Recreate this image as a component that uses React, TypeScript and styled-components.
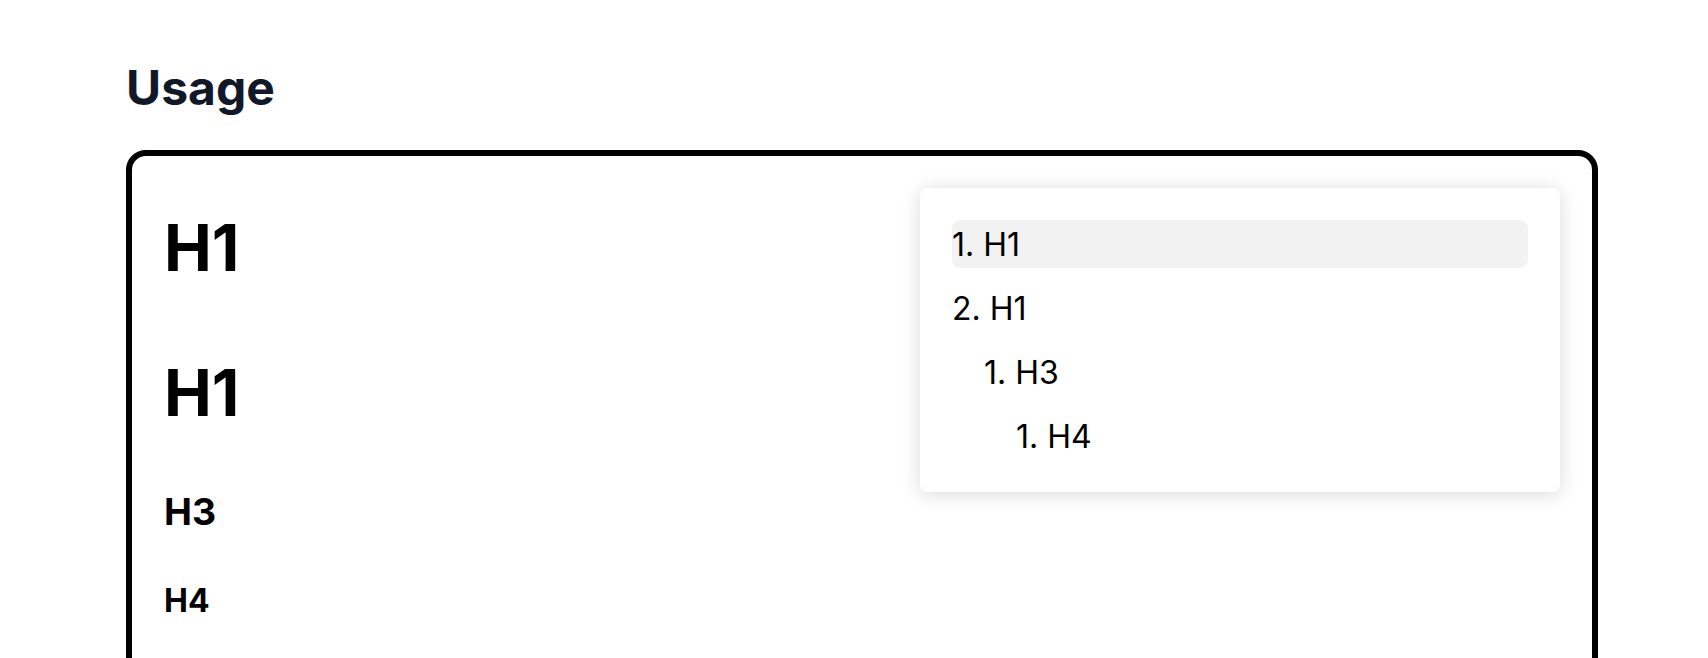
import React from 'react';
import styled, { createGlobalStyle } from 'styled-components';

const GlobalStyle = createGlobalStyle`
  html, body {
    margin: 0;
    padding: 0;
    background: #ffffff;
  }
  body {
    font-family: Inter, "Noto Sans", "Liberation Sans", sans-serif;
    color: #000000;
    line-height: 1.5;
  }
`;

const Page = styled.div`
  padding: 56px 110px 0 126px;
`;

const Title = styled.h2`
  margin: 0 0 30px;
  font-size: 48px;
  line-height: 64px;
  font-weight: 700;
  color: #111827;
`;

const Editor = styled.div`
  position: relative;
  border: 6px solid #000000;
  border-radius: 20px;
  padding: 44px 32px 240px;
  display: flex;
  flex-direction: column;
  align-items: flex-start;
`;

const sizes: Record<number, number> = { 1: 64, 3: 37.44, 4: 32 };
const gaps: Record<number, number> = { 1: 49, 3: 43, 4: 37 };

const Heading = styled.div<{ $level: number }>`
  margin: ${(p) => gaps[p.$level]}px 0 0;
  font-size: ${(p) => sizes[p.$level]}px;
  line-height: 1.5;
  font-weight: 700;
  color: #000000;

  &:first-child {
    margin-top: 0;
  }
`;

const Toc = styled.nav`
  position: absolute;
  top: 32px;
  right: 32px;
  width: 640px;
  box-sizing: border-box;
  padding: 32px;
  background: #ffffff;
  border-radius: 8px;
  box-shadow: 0 2px 20px rgba(0, 0, 0, 0.15);
  display: flex;
  flex-direction: column;
  gap: 16px;
`;

const TocItem = styled.div<{ $depth: number; $active?: boolean }>`
  height: 48px;
  line-height: 50px;
  padding-left: ${(p) => p.$depth * 32}px;
  font-size: 32px;
  font-weight: 400;
  color: #000000;
  border-radius: 8px;
  background: ${(p) => (p.$active ? '#f2f2f2' : 'transparent')};
`;

const headings = [
  { level: 1, text: 'H1' },
  { level: 1, text: 'H1' },
  { level: 3, text: 'H3' },
  { level: 4, text: 'H4' },
];

const toc = [
  { label: '1. H1', depth: 0, active: true },
  { label: '2. H1', depth: 0 },
  { label: '1. H3', depth: 1 },
  { label: '1. H4', depth: 2 },
];

const App: React.FC = () => (
  <>
    <GlobalStyle />
    <Page>
      <Title>Usage</Title>
      <Editor>
        {headings.map((h, i) => (
          <Heading key={i} $level={h.level}>
            {h.text}
          </Heading>
        ))}
        <Toc>
          {toc.map((item, i) => (
            <TocItem key={i} $depth={item.depth} $active={item.active}>
              {item.label}
            </TocItem>
          ))}
        </Toc>
      </Editor>
    </Page>
  </>
);

export default App;
